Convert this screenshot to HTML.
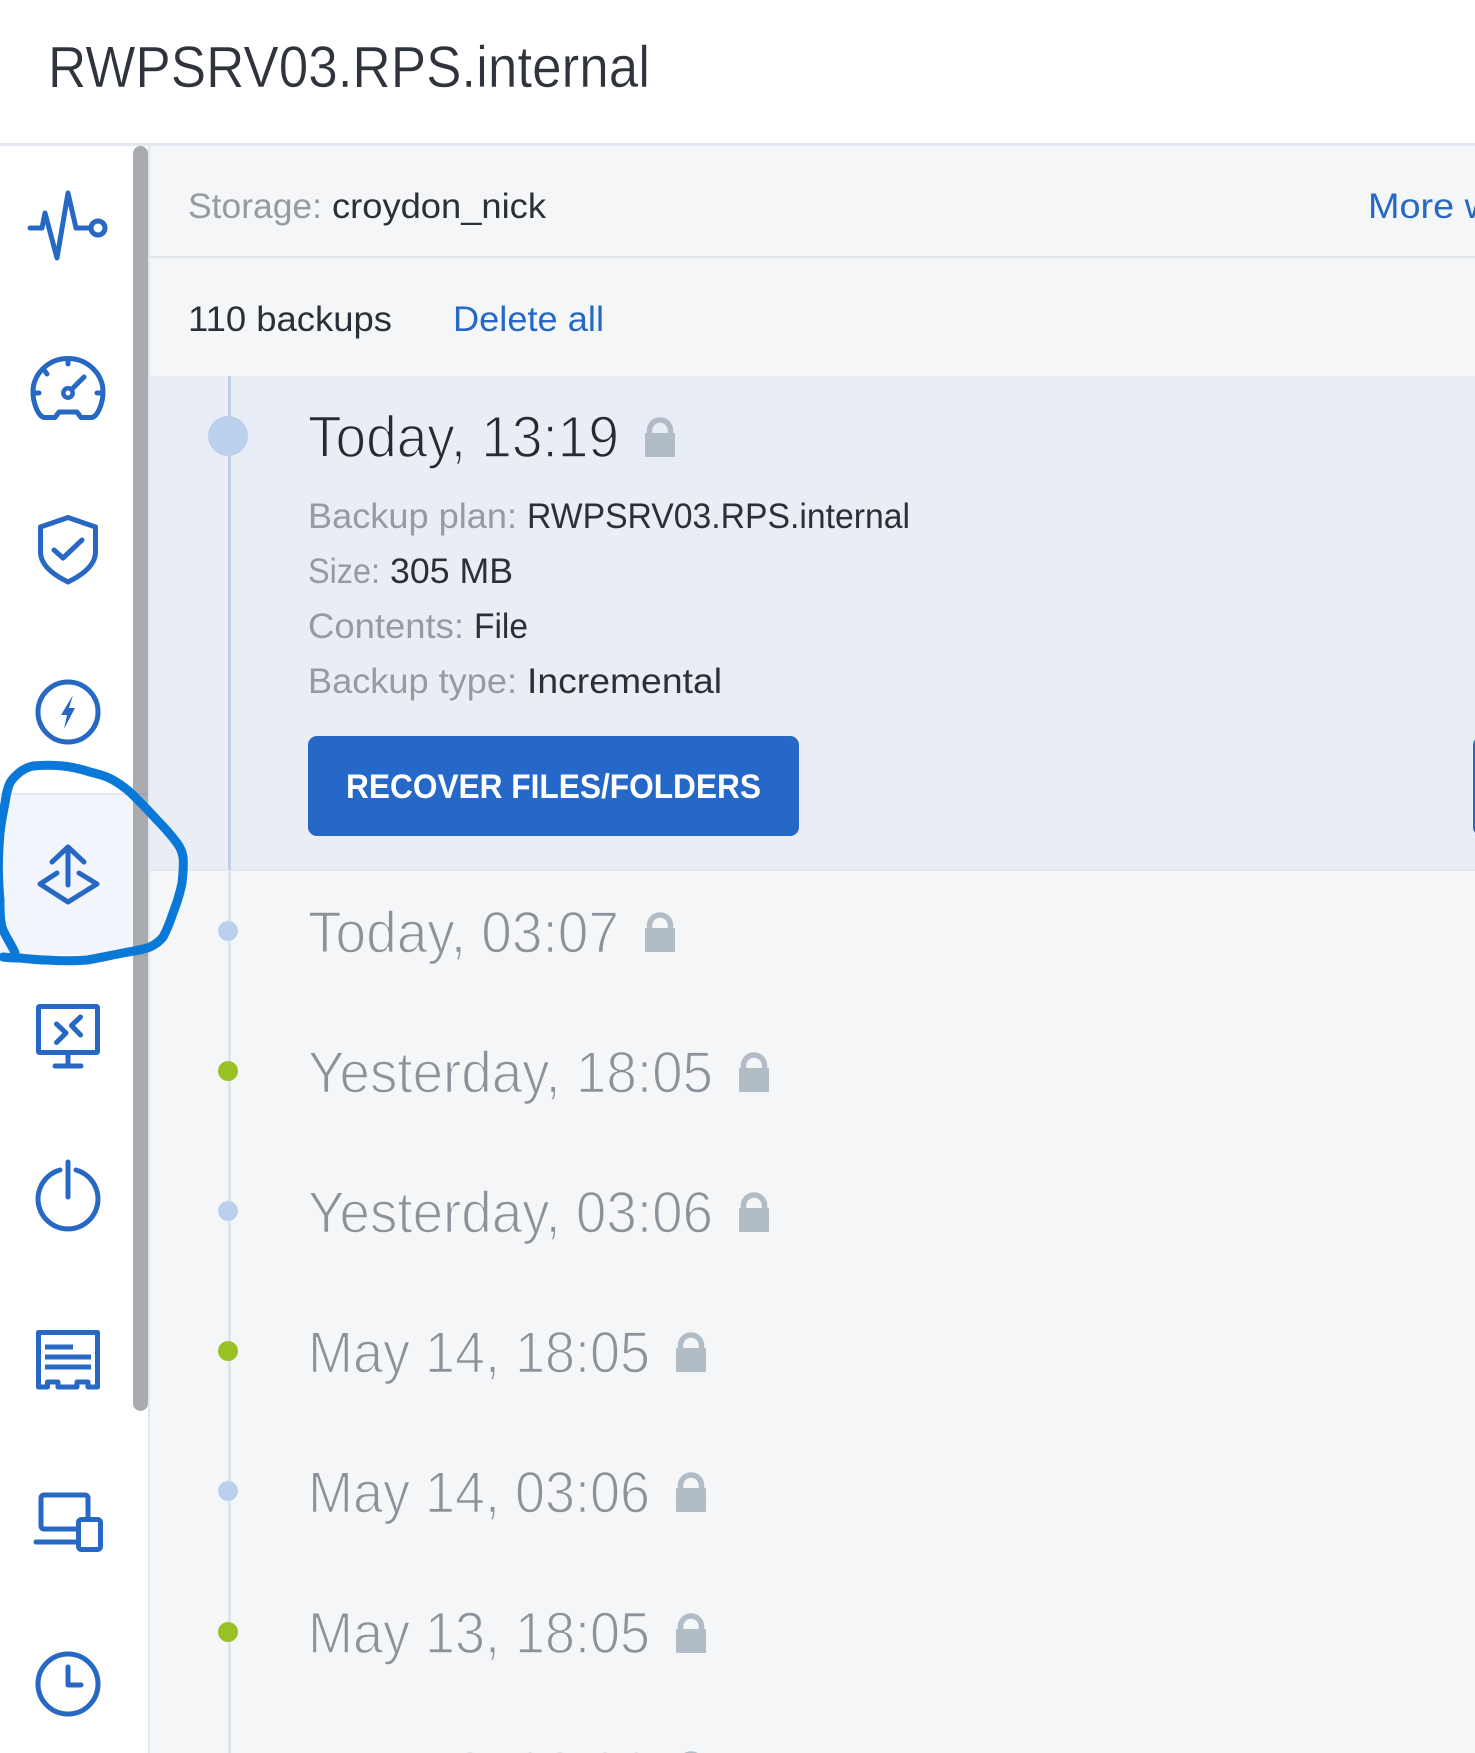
<!DOCTYPE html>
<html lang="en"><head><meta charset="utf-8"><title>RWPSRV03.RPS.internal</title>
<style>
html,body{margin:0;padding:0;background:#fff;width:1475px;height:1753px;overflow:hidden}
svg{display:block}
text{font-family:"Liberation Sans",Arial,sans-serif;font-size:35px}
.l{fill:#969ba3}.v{fill:#2b3038}.a{fill:#2668c4}
.d{font-size:58px;fill:#8c919a;stroke:#f4f6f8;stroke-width:1.5px}
.i{fill:none;stroke:#2668c4;stroke-width:5;stroke-linecap:round;stroke-linejoin:round}
</style></head><body>
<svg xmlns="http://www.w3.org/2000/svg" width="1475" height="1753" viewBox="0 0 1475 1753">
<defs>
<g id="lk"><path d="M4.500 19V13.500A10.500 10.500 0 0 1 25.500 13.500V19" fill="none" stroke="#b1bcc6" stroke-width="5.500"/><rect x="0" y="16" width="30" height="24" rx="1" fill="#b1bcc6"/></g>
</defs>
<rect width="1475" height="1753" fill="#fff"/>
<text x="48" y="87" textLength="602" lengthAdjust="spacingAndGlyphs" style="font-size:58px" fill="#2f343c" stroke="#fff" stroke-width=".5">RWPSRV03.RPS.internal</text>
<rect x="0" y="143" width="1475" height="3" fill="#e4e9f2"/>

<!-- main -->
<rect x="149" y="146" width="1326" height="1607" fill="#f4f6f8"/>
<rect x="148" y="146" width="2" height="1607" fill="#e3e9f4"/>
<text x="188" y="218" class="l" textLength="134" lengthAdjust="spacingAndGlyphs">Storage:</text>
<text x="332" y="218" class="v" textLength="214" lengthAdjust="spacingAndGlyphs">croydon_nick</text>
<text x="1368" y="218" class="a" textLength="124" lengthAdjust="spacingAndGlyphs">More w</text>
<rect x="150" y="256" width="1325" height="2" fill="#e0e3ea"/>
<text x="188" y="331" class="v" textLength="204" lengthAdjust="spacingAndGlyphs">110 backups</text>
<text x="453" y="331" class="a" textLength="151" lengthAdjust="spacingAndGlyphs">Delete all</text>

<!-- selected row -->
<rect x="150" y="376" width="1325" height="494" fill="#e9edf5"/>
<rect x="150" y="869" width="1325" height="2" fill="#e1e8f2"/>
<rect x="1473" y="736" width="20" height="100" rx="9" fill="#2668c8"/>
<rect x="228" y="376" width="3" height="494" fill="#bdd0e8"/>
<rect x="228" y="871" width="3" height="882" fill="#dde5ee"/>
<circle cx="228" cy="436" r="20" fill="#bad0ec"/>
<text x="308" y="457" class="d" textLength="311" lengthAdjust="spacingAndGlyphs" style="fill:#262b33;stroke:#e9edf5">Today, 13:19</text>
<use href="#lk" x="645" y="417"/>
<text x="308" y="528" class="l" textLength="209" lengthAdjust="spacingAndGlyphs">Backup plan:</text>
<text x="527" y="528" class="v" textLength="383" lengthAdjust="spacingAndGlyphs">RWPSRV03.RPS.internal</text>
<text x="308" y="583" class="l" textLength="72" lengthAdjust="spacingAndGlyphs">Size:</text>
<text x="390" y="583" class="v" textLength="123" lengthAdjust="spacingAndGlyphs">305 MB</text>
<text x="308" y="638" class="l" textLength="156" lengthAdjust="spacingAndGlyphs">Contents:</text>
<text x="474" y="638" class="v" textLength="54" lengthAdjust="spacingAndGlyphs">File</text>
<text x="308" y="693" class="l" textLength="209" lengthAdjust="spacingAndGlyphs">Backup type:</text>
<text x="527" y="693" class="v" textLength="195" lengthAdjust="spacingAndGlyphs">Incremental</text>
<rect x="308" y="736" width="491" height="100" rx="9" fill="#2668c8"/>
<text x="346" y="798" textLength="415" lengthAdjust="spacingAndGlyphs" fill="#fff" style="font-weight:700;font-size:34px">RECOVER FILES/FOLDERS</text>

<!-- rows -->
<circle cx="228" cy="931" r="10" fill="#bad0ec"/>
<text x="308" y="952.500" class="d" textLength="311" lengthAdjust="spacingAndGlyphs">Today, 03:07</text>
<use href="#lk" x="645" y="912"/>
<circle cx="228" cy="1071" r="10" fill="#9bc225"/>
<text x="308" y="1092.500" class="d" textLength="405" lengthAdjust="spacingAndGlyphs">Yesterday, 18:05</text>
<use href="#lk" x="739" y="1052"/>
<circle cx="228" cy="1211" r="10" fill="#bad0ec"/>
<text x="308" y="1232.500" class="d" textLength="405" lengthAdjust="spacingAndGlyphs">Yesterday, 03:06</text>
<use href="#lk" x="739" y="1192"/>
<circle cx="228" cy="1351" r="10" fill="#9bc225"/>
<text x="308" y="1372.500" class="d" textLength="342" lengthAdjust="spacingAndGlyphs">May 14, 18:05</text>
<use href="#lk" x="676" y="1332"/>
<circle cx="228" cy="1491" r="10" fill="#bad0ec"/>
<text x="308" y="1512.500" class="d" textLength="342" lengthAdjust="spacingAndGlyphs">May 14, 03:06</text>
<use href="#lk" x="676" y="1472"/>
<circle cx="228" cy="1632" r="10" fill="#9bc225"/>
<text x="308" y="1653" class="d" textLength="342" lengthAdjust="spacingAndGlyphs">May 13, 18:05</text>
<use href="#lk" x="676" y="1613"/>
<text x="308" y="1793" class="d" textLength="342" lengthAdjust="spacingAndGlyphs">May 13, 03:06</text>
<use href="#lk" x="676" y="1751"/>

<!-- sidebar selection -->
<rect x="0" y="794" width="133" height="161" fill="#f2f5fb"/>
<rect x="0" y="793" width="133" height="2" fill="#e3e8f2"/>
<!-- scrollbar -->
<rect x="133" y="146" width="15" height="1265" rx="7.500" fill="#a9abae"/>
<rect x="133" y="793" width="15" height="2" fill="#9fa3a9"/>
<rect x="133" y="954" width="15" height="2" fill="#9fa3a9"/>

<!-- sidebar icons -->
<path class="i" d="M30 228H42L45 213L57 258L68 193L76 228H90" stroke-width="5.500"/>
<circle class="i" cx="98" cy="228" r="7"/>

<path class="i" stroke-width="5.500" d="M45 417.500C38 417.500 33 402 33 392A35 33.500 0 0 1 103 392C103 402 98 417.500 91 417.500H81L77 412H59L55 417.500Z"/>
<path class="i" d="M68 359V364M44 370L47 374M34 393H39M97 393H102M73 388L84 377"/>
<circle cx="68" cy="393" r="4.700" fill="none" stroke="#2668c4" stroke-width="4.500"/>

<path class="i" d="M68 517.500L95.500 527V552C95.500 568 76 578 68 582C60 578 40.500 568 40.500 552V527Z"/>
<path class="i" d="M54 550L63 558L82 540"/>

<circle class="i" cx="68" cy="712" r="30"/>
<path d="M73 695L61 715H67L64 729L75 708H69Z" fill="#2668c4"/>

<path class="i" d="M52 862L68 847L84 862M68 847V885M57 873L40 884L68 902L97 884L79 873" stroke-linecap="butt"/>

<rect class="i" x="38.500" y="1006.500" width="59" height="46" rx="1"/>
<path class="i" d="M68 1053V1066M55 1066H81M56.500 1024L66 1033L56.500 1042.500M80.500 1017L71.500 1025.500L80.500 1035"/>

<path class="i" d="M60 1170A30 30 0 1 0 76 1170M68 1162V1197" stroke-linecap="butt"/>

<path class="i" d="M97.500 1332.500V1387H88V1382H77V1387H58V1382H47.500V1387H38.500V1332.500Z" stroke-linejoin="miter" stroke-linecap="butt"/>
<path d="M45 1347H73M45 1357H91M45 1367H91" fill="none" stroke="#2668c4" stroke-width="5"/>

<path class="i" d="M88 1517V1498A3 3 0 0 0 85 1495H44A3 3 0 0 0 41 1498V1526A3 3 0 0 0 44 1529H76M36 1542H77"/>
<rect class="i" x="78.500" y="1519.500" width="22" height="30" rx="3"/>

<circle class="i" cx="68" cy="1684" r="30"/>
<path class="i" d="M68 1667V1685H81" stroke-linecap="butt" stroke-linejoin="miter"/>

<!-- hand-drawn annotation -->
<path d="M3 957C10 958 15 958 20 958C30 959 38 960 47 960C60 961 75 961 87 960C100 958 112 955 123 953C133 951 142 950 150 947C156 944 160 941 163 937C167 930 170 922 173 913C177 903 180 893 182 883C183 874 184 865 183 857C182 851 180 847 177 843C171 835 164 827 157 820C149 811 141 803 133 795C127 789 120 784 113 780C106 776 98 774 90 772C81 769 72 767 63 766C53 765 43 765 33 766C28 767 24 769 20 772C15 776 12 779 10 783C7 789 6 796 5 803C3 813 1 823 0 833C-2 855 -2 880 0 900C0 910 0 919 2 927C4 933 7 938 10 943C12 947 14 950 15 953" fill="none" stroke="#0a78d6" stroke-width="9" stroke-linecap="round" stroke-linejoin="round"/>
</svg>
</body></html>
